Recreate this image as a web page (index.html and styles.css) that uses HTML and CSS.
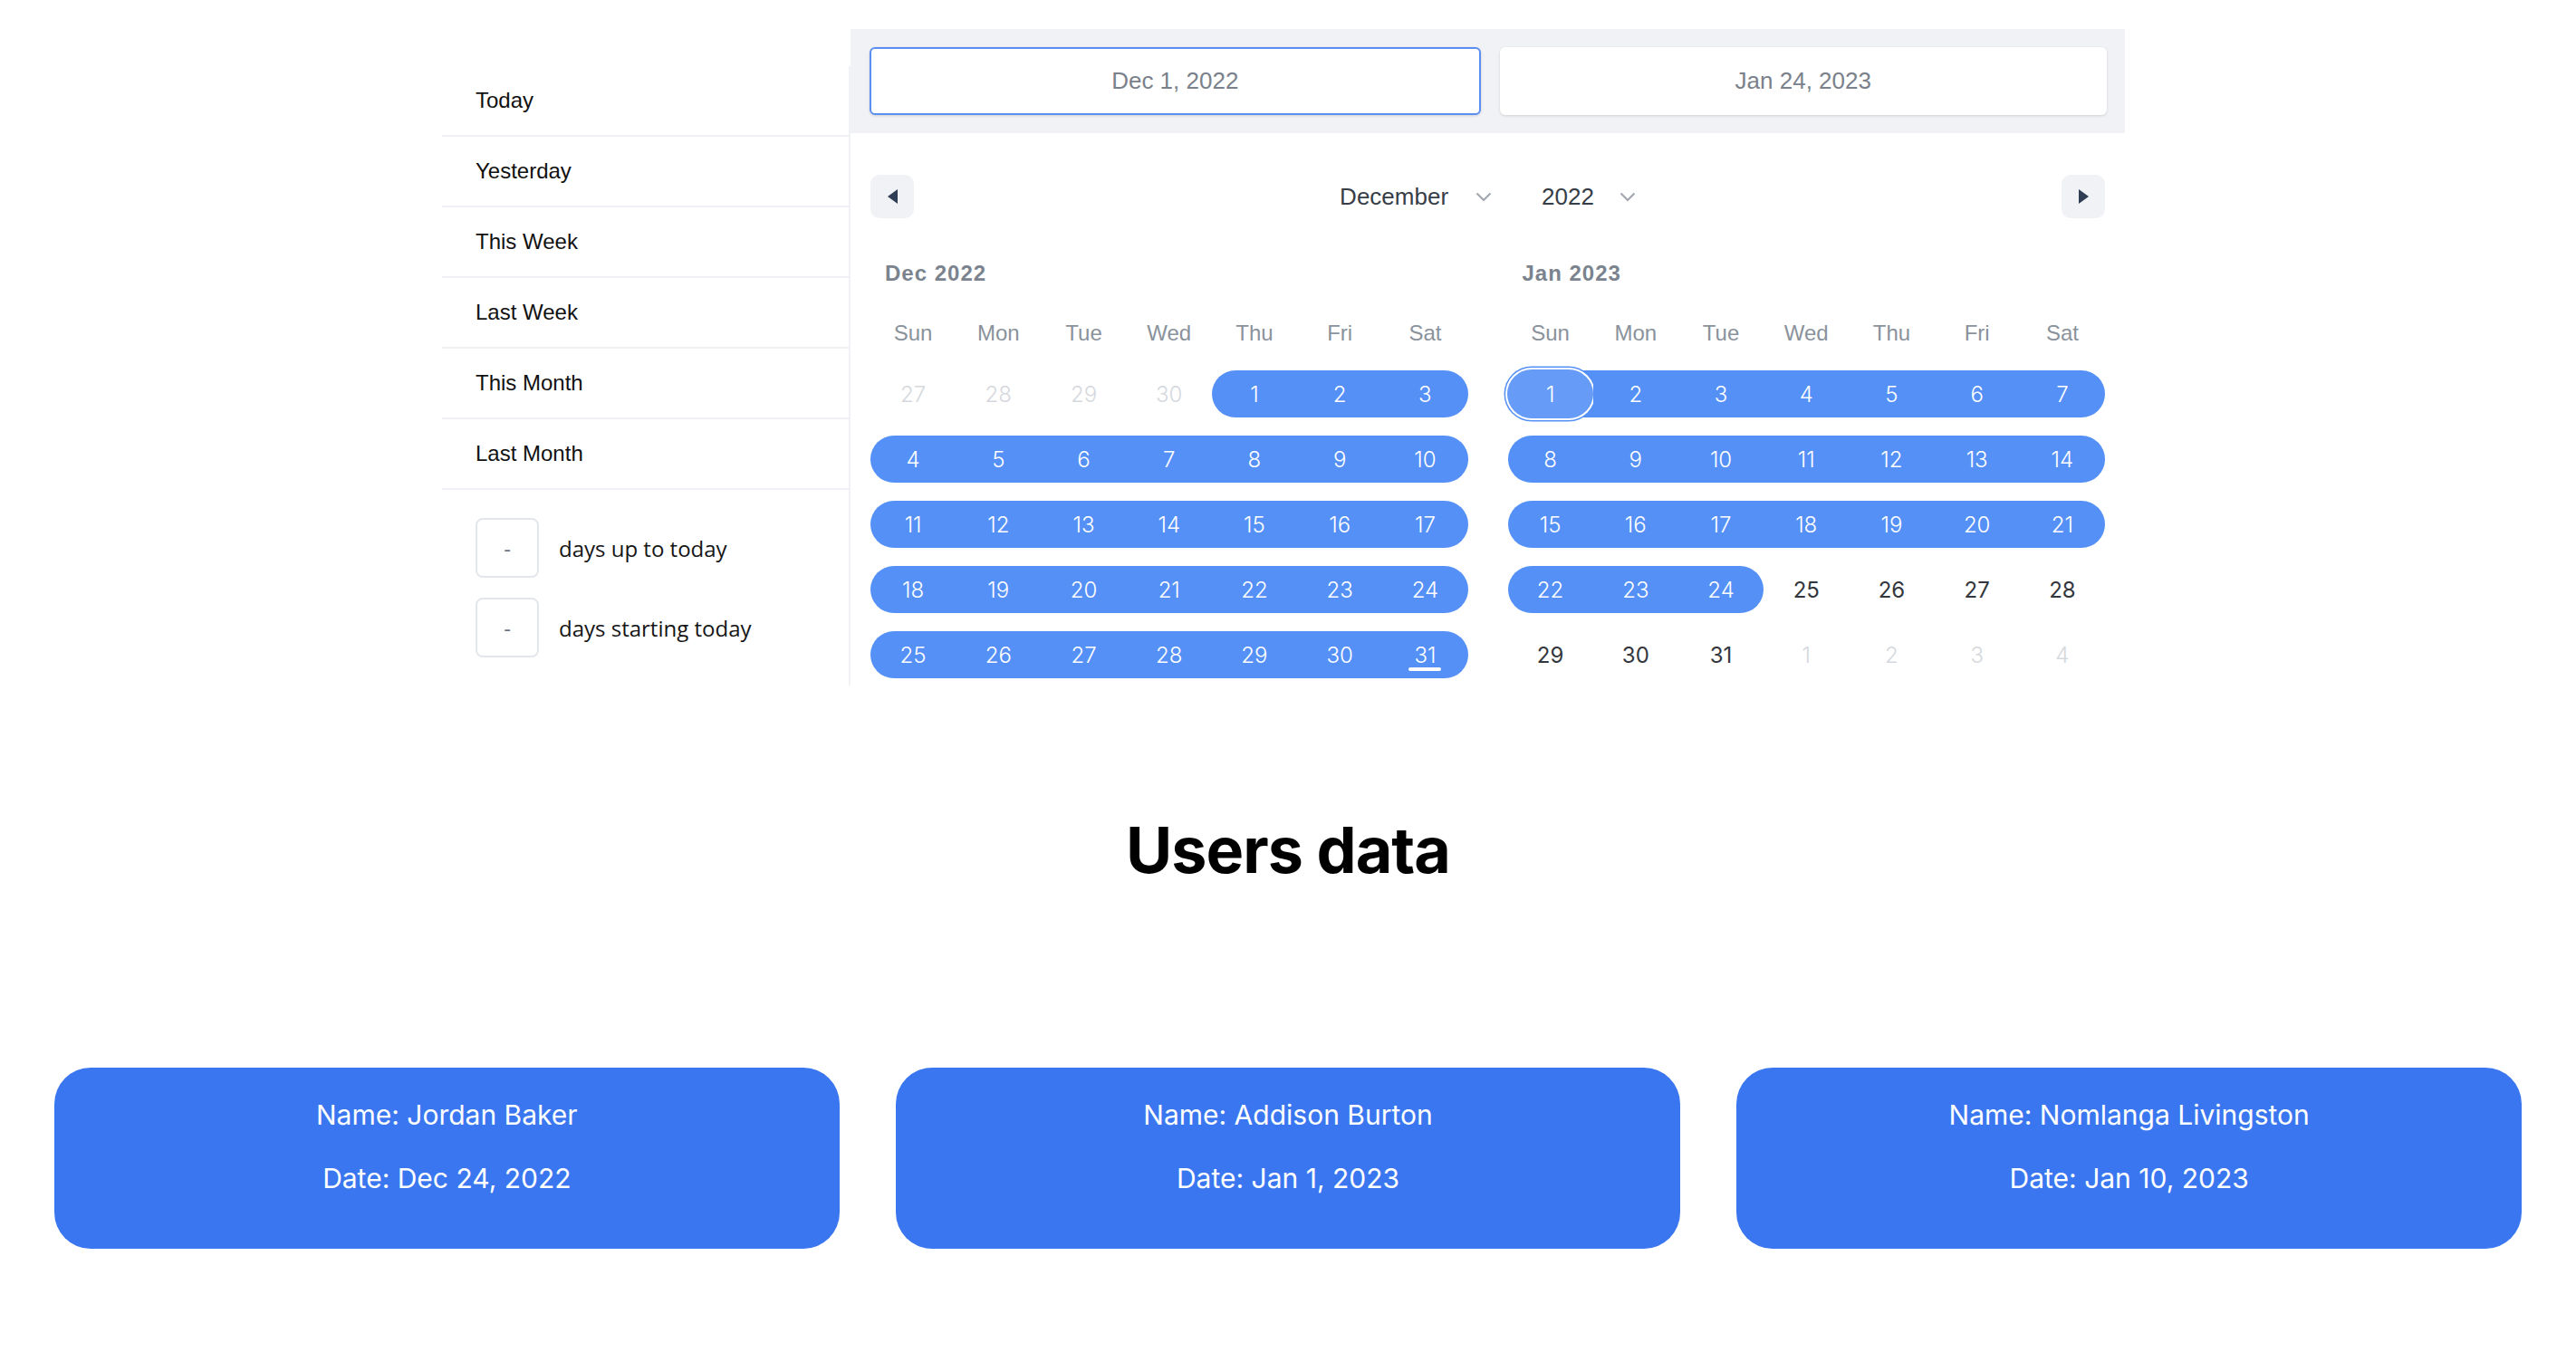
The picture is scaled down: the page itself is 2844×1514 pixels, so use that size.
FILE: index.html
```html
<!DOCTYPE html>
<html lang="en">
<head>
<meta charset="utf-8">
<title>Users data</title>
<link rel="stylesheet" href="styles.css">
</head>
<body>
<div class="picker">
  <aside class="presets">
    <ul class="preset-list">
      <li>Today</li>
      <li>Yesterday</li>
      <li>This Week</li>
      <li>Last Week</li>
      <li>This Month</li>
      <li>Last Month</li>
    </ul>
    <div class="range-rows">
      <div class="range-row"><span class="num-box">-</span><span class="range-label">days up to today</span></div>
      <div class="range-row"><span class="num-box">-</span><span class="range-label">days starting today</span></div>
    </div>
  </aside>
  <section class="cal">
    <div class="date-inputs">
      <div class="date-input active">Dec 1, 2022</div>
      <div class="date-input">Jan 24, 2023</div>
    </div>
    <div class="cal-body">
      <div class="nav">
        <button class="nav-btn" aria-label="Previous month"><svg width="11" height="16" viewBox="0 0 11 16"><polygon points="11,0 11,16 0,8" fill="#2f3e55"/></svg></button>
        <div class="selects">
          <div class="select"><span>December</span><svg width="18" height="11" viewBox="0 0 18 11"><polyline points="1.5,1.5 9,9 16.5,1.5" fill="none" stroke="#a3a8b0" stroke-width="2.2"/></svg></div>
          <div class="select"><span>2022</span><svg width="18" height="11" viewBox="0 0 18 11"><polyline points="1.5,1.5 9,9 16.5,1.5" fill="none" stroke="#a3a8b0" stroke-width="2.2"/></svg></div>
        </div>
        <button class="nav-btn" aria-label="Next month"><svg width="11" height="16" viewBox="0 0 11 16"><polygon points="0,0 0,16 11,8" fill="#2f3e55"/></svg></button>
      </div>
      <div class="months">
        <div class="month">
          <div class="month-title">Dec 2022</div>
          <div class="week weekdays"><span>Sun</span><span>Mon</span><span>Tue</span><span>Wed</span><span>Thu</span><span>Fri</span><span>Sat</span></div>
          <div class="week"><span class="d muted">27</span><span class="d muted">28</span><span class="d muted">29</span><span class="d muted">30</span><span class="d in start">1</span><span class="d in">2</span><span class="d in end">3</span></div>
          <div class="week"><span class="d in start">4</span><span class="d in">5</span><span class="d in">6</span><span class="d in">7</span><span class="d in">8</span><span class="d in">9</span><span class="d in end">10</span></div>
          <div class="week"><span class="d in start">11</span><span class="d in">12</span><span class="d in">13</span><span class="d in">14</span><span class="d in">15</span><span class="d in">16</span><span class="d in end">17</span></div>
          <div class="week"><span class="d in start">18</span><span class="d in">19</span><span class="d in">20</span><span class="d in">21</span><span class="d in">22</span><span class="d in">23</span><span class="d in end">24</span></div>
          <div class="week"><span class="d in start">25</span><span class="d in">26</span><span class="d in">27</span><span class="d in">28</span><span class="d in">29</span><span class="d in">30</span><span class="d in end today">31</span></div>
        </div>
        <div class="month">
          <div class="month-title">Jan 2023</div>
          <div class="week weekdays"><span>Sun</span><span>Mon</span><span>Tue</span><span>Wed</span><span>Thu</span><span>Fri</span><span>Sat</span></div>
          <div class="week"><span class="d in focus"><b>1</b></span><span class="d in">2</span><span class="d in">3</span><span class="d in">4</span><span class="d in">5</span><span class="d in">6</span><span class="d in end">7</span></div>
          <div class="week"><span class="d in start">8</span><span class="d in">9</span><span class="d in">10</span><span class="d in">11</span><span class="d in">12</span><span class="d in">13</span><span class="d in end">14</span></div>
          <div class="week"><span class="d in start">15</span><span class="d in">16</span><span class="d in">17</span><span class="d in">18</span><span class="d in">19</span><span class="d in">20</span><span class="d in end">21</span></div>
          <div class="week"><span class="d in start">22</span><span class="d in">23</span><span class="d in end">24</span><span class="d">25</span><span class="d">26</span><span class="d">27</span><span class="d">28</span></div>
          <div class="week"><span class="d">29</span><span class="d">30</span><span class="d">31</span><span class="d muted">1</span><span class="d muted">2</span><span class="d muted">3</span><span class="d muted">4</span></div>
        </div>
      </div>
    </div>
  </section>
</div>

<h1 class="title">Users data</h1>

<div class="cards">
  <div class="card"><p>Name: Jordan Baker</p><p>Date: Dec 24, 2022</p></div>
  <div class="card"><p>Name: Addison Burton</p><p>Date: Jan 1, 2023</p></div>
  <div class="card"><p>Name: Nomlanga Livingston</p><p>Date: Jan 10, 2023</p></div>
</div>
</body>
</html>
```
FILE: styles.css
```css
* { box-sizing: border-box; }

body {
  margin: 0;
  background: #ffffff;
  font-family: "Liberation Sans", Arial, sans-serif;
  color: #111111;
}

.picker {
  width: 1858px;
  margin: 32px 0 0 calc(50% - 934px);
  display: flex;
  align-items: flex-start;
}

/* presets sidebar */
.presets {
  width: 451px;
  flex: none;
  margin-top: 41px;
  border-right: 2px solid #f1f2f5;
}

.preset-list {
  list-style: none;
  margin: 0;
  padding: 0;
}

.preset-list li {
  height: 78px;
  display: flex;
  align-items: center;
  padding-left: 37px;
  border-bottom: 2px solid #f0f1f4;
  font-size: 24px;
  color: #111111;
}

.range-rows {
  padding: 31px 0 31px 37px;
  display: flex;
  flex-direction: column;
  gap: 22px;
}

.range-row {
  display: flex;
  align-items: center;
  gap: 22px;
}

.num-box {
  width: 70px;
  height: 66px;
  border: 2px solid #e3e7ec;
  border-radius: 8px;
  display: flex;
  align-items: center;
  justify-content: center;
  font-family: "Open Sans", sans-serif;
  font-size: 24px;
  color: #6b7280;
}

.range-label {
  font-family: "Open Sans", sans-serif;
  font-size: 24px;
  color: #161616;
}

/* calendar */
.cal {
  flex: 1;
  min-width: 0;
}

.date-inputs {
  background: #f0f2f5;
  padding: 20px 20px 20px 21px;
  display: flex;
  gap: 21px;
}

.date-input {
  flex: 1;
  height: 75px;
  background: #ffffff;
  border-radius: 6px;
  box-shadow: 0 1px 3px rgba(0, 0, 0, 0.14);
  display: flex;
  align-items: center;
  justify-content: center;
  font-size: 26px;
  color: #7a818b;
}

.date-input.active {
  border: 2px solid #5a8ef0;
}

.cal-body {
  padding: 46px 22px 8px 22px;
}

.nav {
  display: flex;
  align-items: center;
  height: 48px;
}

.nav-btn {
  width: 48px;
  height: 48px;
  flex: none;
  border: 0;
  padding: 0;
  border-radius: 10px;
  background: #f1f2f6;
  display: flex;
  align-items: center;
  justify-content: center;
}

.selects {
  flex: 1;
  display: flex;
  justify-content: center;
  gap: 55px;
}

.select {
  display: flex;
  align-items: center;
  gap: 30px;
  font-size: 26px;
  color: #363d47;
}

.select + .select { gap: 28px; }

.months {
  display: grid;
  grid-template-columns: 1fr 1fr;
  column-gap: 44px;
  margin-top: 46px;
}

.month-title {
  height: 30px;
  line-height: 30px;
  padding-left: 16px;
  font-size: 24px;
  font-weight: 700;
  letter-spacing: 1px;
  color: #7b848e;
  margin-bottom: 31px;
}

.week {
  display: grid;
  grid-template-columns: repeat(7, 1fr);
  height: 52px;
  margin-bottom: 20px;
}

.week:last-child { margin-bottom: 0; }

.weekdays {
  height: 40px;
  margin-bottom: 21px;
}

.weekdays span {
  display: flex;
  align-items: center;
  justify-content: center;
  font-size: 24px;
  color: #8a929b;
}

.d {
  display: flex;
  align-items: center;
  justify-content: center;
  font-family: Inter, "Liberation Sans", sans-serif;
  font-size: 24px;
  font-weight: 400;
  color: #33373d;
  position: relative;
}

.d.muted { color: #d5d8dd; font-weight: 300; }

.d.in {
  background: #5590f6;
  color: #ffffff;
  font-weight: 300;
}

.d.start { border-radius: 26px 0 0 26px; }
.d.end { border-radius: 0 26px 26px 0; }

.d.today::after {
  content: "";
  position: absolute;
  left: 50%;
  bottom: 8px;
  width: 36px;
  height: 4px;
  margin-left: -18px;
  border-radius: 2px;
  background: #ffffff;
}

.d.focus {
  background: linear-gradient(90deg, transparent 50%, #5590f6 50%);
}

.d.focus::before {
  content: "";
  position: absolute;
  inset: -1px 0 -1px -1px;
  border-radius: 27px;
  background: #669cf7;
  box-shadow: 0 0 0 2px #ffffff, 0 0 0 3.5px #5590f6;
}

.d.focus b {
  position: relative;
  font-weight: 300;
}

/* heading */
.title {
  margin: 138px 0 0;
  text-align: center;
  font-family: Inter, "Liberation Sans", sans-serif;
  font-size: 70px;
  font-weight: 700;
  letter-spacing: -1px;
  line-height: 87px;
  color: #000000;
}

/* cards */
.cards {
  display: grid;
  grid-template-columns: repeat(3, 1fr);
  column-gap: 62px;
  padding: 0 60px;
  margin-top: 197px;
}

.card {
  height: 200px;
  background: #3a76f0;
  border-radius: 40px;
  padding-top: 28px;
  text-align: center;
  color: #ffffff;
  font-family: Inter, "Liberation Sans", sans-serif;
  font-size: 30px;
}

.card p {
  margin: 0 0 22px;
  line-height: 48px;
}
```
